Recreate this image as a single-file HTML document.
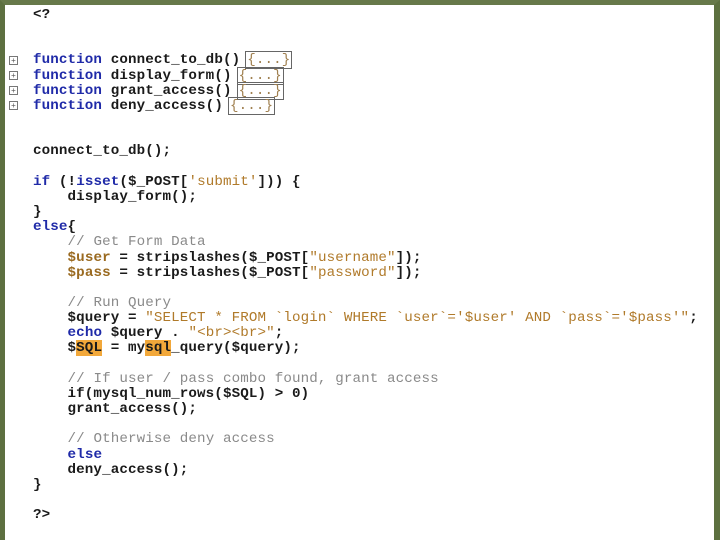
<!DOCTYPE html>
<html><head><style>
html,body{margin:0;padding:0;width:720px;height:540px;overflow:hidden;background:#fff}
.frame{position:absolute;left:0;top:0;width:720px;height:540px;box-sizing:border-box;border-left:5px solid #5d7040;border-right:6px solid #5d7040;border-top:5px solid #67794a}
pre{position:absolute;left:33px;top:8px;margin:0;font-family:"Liberation Mono",monospace;font-size:14.2px;line-height:15.15px;color:#1a1a1a;font-weight:bold;letter-spacing:0.12px}
.k{color:#1f2aa8}
.s{color:#b07a2a;font-weight:normal}
.c{color:#8a8a8a;font-weight:normal}
.v{color:#9a6a20}
.b{border:1px solid #666;color:#a08050;font-weight:normal;padding:0 1px;margin-left:5px}
.h{background:#f2a83a}
.fold{position:absolute;left:9px;width:7px;height:7px;border:1px solid #777;font:8px/7px "Liberation Sans",sans-serif;text-align:center;color:#555}
</style></head><body>
<div class="frame"></div>
<div class="fold" style="top:56px">+</div>
<div class="fold" style="top:71px">+</div>
<div class="fold" style="top:86px">+</div>
<div class="fold" style="top:101px">+</div>
<pre>&lt;?


<span class="k">function</span> connect_to_db()<span class="b">{...}</span>
<span class="k">function</span> display_form()<span class="b">{...}</span>
<span class="k">function</span> grant_access()<span class="b">{...}</span>
<span class="k">function</span> deny_access()<span class="b">{...}</span>


connect_to_db();

<span class="k">if</span> (!<span class="k">isset</span>($_POST[<span class="s">'submit'</span>])) {
    display_form();
}
<span class="k">else</span>{
    <span class="c">// Get Form Data</span>
    <span class="v">$user</span> = stripslashes($_POST[<span class="s">"username"</span>]);
    <span class="v">$pass</span> = stripslashes($_POST[<span class="s">"password"</span>]);

    <span class="c">// Run Query</span>
    $query = <span class="s">"SELECT * FROM `login` WHERE `user`='$user' AND `pass`='$pass'"</span>;
    <span class="k">echo</span> $query . <span class="s">"&lt;br&gt;&lt;br&gt;"</span>;
    $<span class="h">SQL</span> = my<span class="h">sql</span>_query($query);

    <span class="c">// If user / pass combo found, grant access</span>
    if(mysql_num_rows($SQL) &gt; 0)
    grant_access();

    <span class="c">// Otherwise deny access</span>
    <span class="k">else</span>
    deny_access();
}

?&gt;</pre>
</body></html>
